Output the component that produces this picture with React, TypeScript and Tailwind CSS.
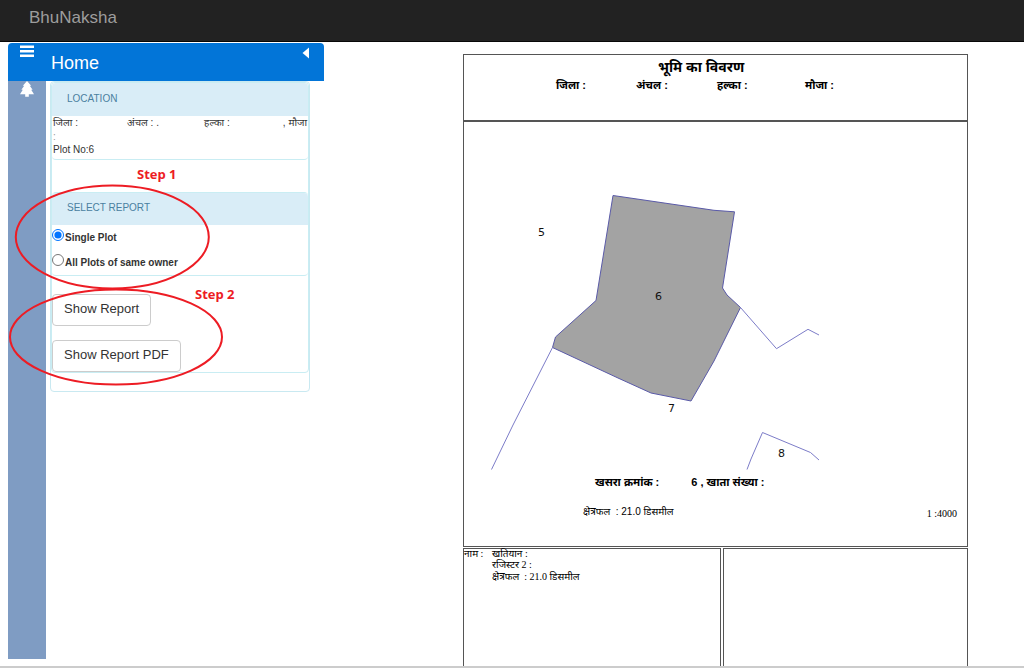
import { useState } from "react";

const reports = [
  { id: "single", label: "Single Plot" },
  { id: "owner", label: "All Plots of same owner" },
];

const plotNumbers = [
  { label: "5", x: 538, y: 236 },
  { label: "6", x: 655, y: 300 },
  { label: "7", x: 668, y: 412 },
  { label: "8", x: 778, y: 457 },
];

function MenuIcon() {
  return (
    <svg viewBox="0 0 14 13" className="h-[13px] w-3.5" fill="currentColor">
      <path d="M0 0.500h14v2.500H0zM0 5h14v2.500H0zM0 9.500h14v2.500H0z" />
    </svg>
  );
}

function TreeIcon() {
  return (
    <svg viewBox="0 0 14 16" className="h-4 w-3.5" fill="currentColor">
      <path d="M7 0L11.200 4.800H9.800L12.600 8.800H11.200L14 13.200H8.800V15.800H5.200V13.200H0L2.800 8.800H1.400L4.200 4.800H2.800z" />
    </svg>
  );
}

function PlotMap() {
  return (
    <svg
      viewBox="490 194 330 277"
      className="ml-[26px] mt-[72px] block h-[277px] w-[330px]"
      role="img"
      aria-label="Plot 6"
    >
      <polygon
        points="613,195.5 714,210.3 734.5,211.8 722.5,288 727,295 740.5,307.5 714,361 691,401 651,393 618,378 552.5,347.5 555.5,337 596,300.5"
        fill="#a3a3a3"
        stroke="#5a5aa8"
      />
      <g fill="none" stroke="#7c7cc8">
        <path d="M552.5 347.5L513 425L491.500 469.500" />
        <path d="M740.5 307.5L776.500 348.700L808 329.300L819 335" />
        <path d="M747 469.500L751 459L762.500 432.500L810.500 452.500L819 460" />
      </g>
      <g fontFamily="DejaVu Sans, sans-serif" fontSize="11" fill="#111">
        {plotNumbers.map((plot) => (
          <text key={plot.label} x={plot.x} y={plot.y}>
            {plot.label}
          </text>
        ))}
      </g>
    </svg>
  );
}

function StepMarks() {
  return (
    <div className="pointer-events-none absolute inset-0 font-['Open_Sans',sans-serif] text-[13px] font-bold leading-4 text-[#ed1c24]">
      <svg
        viewBox="8 43 316 350"
        className="absolute left-0 top-0 h-[350px] w-[316px]"
        fill="none"
        stroke="#ed1c24"
        strokeWidth="2"
      >
        <ellipse cx="112.300" cy="237" rx="96.500" ry="51.500" />
        <ellipse cx="116" cy="337" rx="106" ry="47.500" />
      </svg>
      <span className="absolute left-[129px] top-[123px]">Step 1</span>
      <span className="absolute left-[187px] top-[243px]">Step 2</span>
    </div>
  );
}

function Sidebar() {
  const [report, setReport] = useState("single");

  return (
    <aside className="relative mb-[7px] mt-px flex w-[316px] shrink-0 flex-col">
      <header className="flex h-[38px] shrink-0 items-start rounded-t-sm bg-[#0275d8] text-white">
        <button type="button" aria-label="Menu" className="flex w-[38px] justify-center pt-0.5">
          <MenuIcon />
        </button>
        <h1 className="flex-1 pl-[5px] pt-2 text-[18px] leading-6">Home</h1>
        <button type="button" aria-label="Collapse" className="pr-[15px] pt-1">
          <svg viewBox="0 0 7 12" className="h-3 w-[7px]" fill="currentColor">
            <path d="M7 0.500V11.500L0.500 6z" />
          </svg>
        </button>
      </header>

      <div className="flex flex-1">
        <nav className="flex w-[38px] justify-center bg-[#7f9cc3] text-white">
          <a href="#tree" aria-label="Tree">
            <TreeIcon />
          </a>
        </nav>

        <div className="ml-1 w-[260px] self-start rounded border border-[#c9e9f1] pb-[18px] text-[10px] text-[#333]">
          <div className="rounded border border-[#c9edf3]">
            <section className="rounded-b border-b border-[#c9edf3]">
              <h2 className="rounded-t bg-[#d9edf7] px-[15px] pb-2.5 pt-[9px] leading-[14px] text-[#4a80a0]">
                LOCATION
              </h2>
              <div className="flex h-[14px] justify-between px-px leading-[14px]">
                <span>जिला :</span>
                <span className="ml-5">अंचल : .</span>
                <span className="ml-4">हल्का :</span>
                <span className="ml-6">, मौजा</span>
              </div>
              <p className="pl-px leading-[13px] text-[#999]">:</p>
              <p className="pb-0.5 pl-px leading-[14px]">Plot No:6</p>
            </section>

            <section className="mt-8 rounded border-b border-t border-[#c9edf3]">
              <h2 className="rounded-t bg-[#d9edf7] px-[15px] pb-2.5 pt-2 leading-[14px] text-[#4a80a0]">
                SELECT REPORT
              </h2>
              {reports.map(({ id, label }) => (
                <label key={id} className="flex h-[25px] items-center gap-px font-bold">
                  <input
                    type="radio"
                    name="report"
                    checked={report === id}
                    onChange={() => setReport(id)}
                    className="mb-1.5 size-3 accent-[#0075ff]"
                  />
                  {label}
                </label>
              ))}
            </section>

            <div className="flex flex-col items-start gap-[14px] pt-[18px] text-[13px]">
              <button
                type="button"
                className="h-8 rounded border border-[#ccc] bg-white px-[11px] pb-0.5"
              >
                Show Report
              </button>
              <button
                type="button"
                className="h-8 rounded border border-[#ccc] bg-white px-[11px] pb-0.5"
              >
                Show Report PDF
              </button>
            </div>
          </div>
        </div>
      </div>
      <StepMarks />
    </aside>
  );
}

function Report() {
  return (
    <article className="ml-[139px] mr-14 mt-3 flex min-w-0 flex-1 flex-col text-black">
      <header className="h-[67px] border border-[#555] font-bold">
        <h2 className="pl-[194px] pt-0.5 text-[14px] leading-5">भूमि का विवरण</h2>
        <div className="flex pl-[92px] text-[11px] leading-4">
          <span className="w-20">जिला :</span>
          <span className="w-[81px]">अंचल :</span>
          <span className="w-[88px]">हल्का :</span>
          <span>मौजा :</span>
        </div>
      </header>

      <section className="h-[426px] shrink-0 border border-[#555]">
        <PlotMap />
        <p className="flex gap-8 pl-[131px] pt-[3px] text-[11px] font-bold leading-4">
          <span>खसरा क्रमांक :</span>
          <span>6 , खाता संख्या :</span>
        </p>
        <div className="flex justify-between pl-[119px] pr-[10px] pt-3.5 text-[10px] leading-4">
          <span>क्षेत्रफल&nbsp; : 21.0 डिसमील</span>
          <span className="pt-0.5 font-['Liberation_Serif',serif]">1 :4000</span>
        </div>
      </section>

      <div className="mt-px flex flex-1 gap-0.5 font-['Liberation_Serif','Noto_Sans',serif] text-[10px]">
        <section className="flex w-[51%] border border-b-0 border-[#555]">
          <span className="w-[28px] shrink-0 leading-[10px]">नाम :</span>
          <div className="leading-3">
            <p className="leading-[10px]">खतियान :</p>
            <p>रजिस्टर 2 :</p>
            <p>क्षेत्रफल&nbsp; : 21.0 डिसमील</p>
          </div>
        </section>
        <section className="flex-1 border border-b-0 border-[#555]" />
      </div>
    </article>
  );
}

export default function App() {
  return (
    <div className="flex min-h-screen flex-col border-b-2 border-[#ccc] bg-white font-['Liberation_Sans','Noto_Sans',sans-serif]">
      <nav className="h-[42px] shrink-0 border-b border-[#080808] bg-[#222] px-[29px]">
        <a href="#home" className="text-[17px] leading-9 text-[#9d9d9d]">
          BhuNaksha
        </a>
      </nav>
      <main className="flex flex-1 pl-2">
        <Sidebar />
        <Report />
      </main>
    </div>
  );
}
